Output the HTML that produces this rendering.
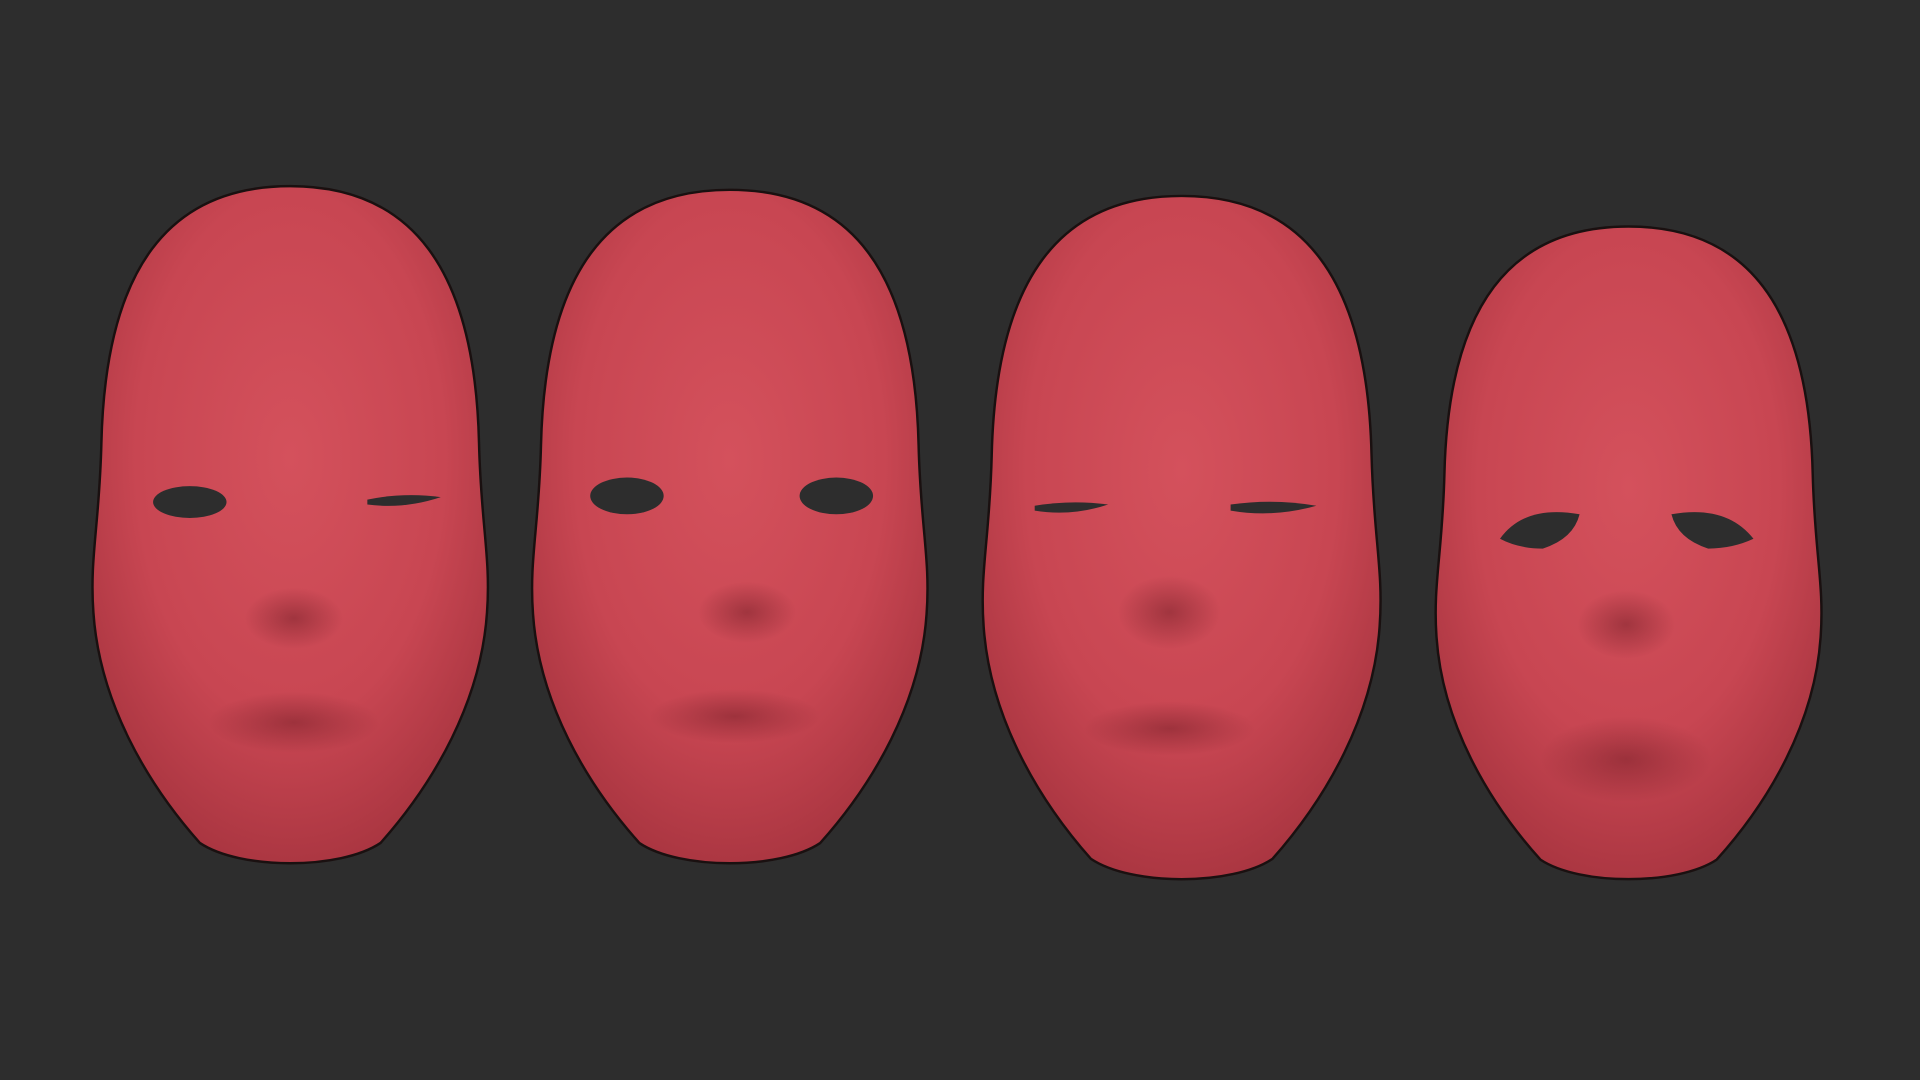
<!DOCTYPE html>
<html><head><meta charset="utf-8"><style>
html,body{margin:0;padding:0;background:#2d2d2d;width:1920px;height:1080px;overflow:hidden}
svg{display:block}
</style></head><body>
<svg width="1920" height="1080" viewBox="0 0 1568 882" xmlns="http://www.w3.org/2000/svg">
<defs>
<radialGradient id="g" cx="0.5" cy="0.4" r="0.65">
<stop offset="0" stop-color="#d4515c"/>
<stop offset="0.6" stop-color="#c84652"/>
<stop offset="1" stop-color="#a5333e"/>
</radialGradient>
<radialGradient id="sh" cx="0.5" cy="0.5" r="0.5">
<stop offset="0" stop-color="#6a1a22" stop-opacity="0.45"/>
<stop offset="1" stop-color="#6a1a22" stop-opacity="0"/>
</radialGradient>
</defs>
<rect width="1568" height="882" fill="#2d2d2d"/>
<g fill="url(#g)" stroke="#1a1010" stroke-width="2">
<path d="M237,152 C335.4,152 387.9,218.4 391.2,362.1 C392.8,428.5 401,456.2 397.7,500.4 C392.8,572.3 355.1,638.6 310.8,688.4 C278,710.5 196,710.5 163.2,688.4 C118.9,638.6 81.2,572.3 76.3,500.4 C73,456.2 81.2,428.5 82.8,362.1 C86.1,218.4 138.6,152 237,152Z"/>
<path d="M596,155 C694.4,155 746.9,221 750.2,364 C751.8,430 760,457.5 756.7,501.5 C751.8,573 714.1,639 669.8,688.5 C637,710.5 555,710.5 522.2,688.5 C477.9,639 440.2,573 435.3,501.5 C432,457.5 440.2,430 441.8,364 C445.1,221 497.6,155 596,155Z"/>
<path d="M965,160 C1064,160 1116.8,227 1120.1,372 C1121.8,439 1130,466.9 1126.7,511.5 C1121.8,584.1 1083.8,651 1039.3,701.3 C1006.3,723.6 923.8,723.6 890.8,701.3 C846.2,651 808.3,584.1 803.3,511.5 C800,466.9 808.3,439 809.9,372 C813.2,227 866,160 965,160Z"/>
<path d="M1330,185 C1426,185 1477.2,249 1480.4,387.5 C1482,451.5 1490,478.2 1486.8,520.8 C1482,590.1 1445.2,654 1402,702 C1370,723.3 1290,723.3 1258,702 C1214.8,654 1178,590.1 1173.2,520.8 C1170,478.2 1178,451.5 1179.6,387.5 C1182.8,249 1234,185 1330,185Z"/>
</g>
<g fill="url(#sh)">
<ellipse cx="240" cy="505" rx="40" ry="25"/>
<ellipse cx="240" cy="590" rx="70" ry="25"/>
<ellipse cx="610" cy="500" rx="40" ry="25"/>
<ellipse cx="600" cy="585" rx="70" ry="22"/>
<ellipse cx="955" cy="500" rx="42" ry="30"/>
<ellipse cx="955" cy="595" rx="70" ry="22"/>
<ellipse cx="1328" cy="510" rx="40" ry="28"/>
<ellipse cx="1328" cy="620" rx="70" ry="35"/>
</g>
<g fill="#2d2d2d">
<ellipse cx="155" cy="410" rx="30" ry="13"/>
<path d="M300,408 Q330,402 360,406 Q330,416 300,412Z"/>
<ellipse cx="512" cy="405" rx="30" ry="15"/>
<ellipse cx="683" cy="405" rx="30" ry="15"/>
<path d="M845,413 Q875,408 905,412 Q875,422 845,417Z"/>
<path d="M1005,412 Q1040,407 1075,413 Q1040,423 1005,417Z"/>
<path d="M1225,440 Q1245,412 1290,420 Q1285,440 1260,448 Q1240,448 1225,440Z"/>
<path d="M1365,420 Q1410,412 1432,440 Q1415,448 1395,448 Q1370,440 1365,420Z"/>
</g>
</svg>
</body></html>
